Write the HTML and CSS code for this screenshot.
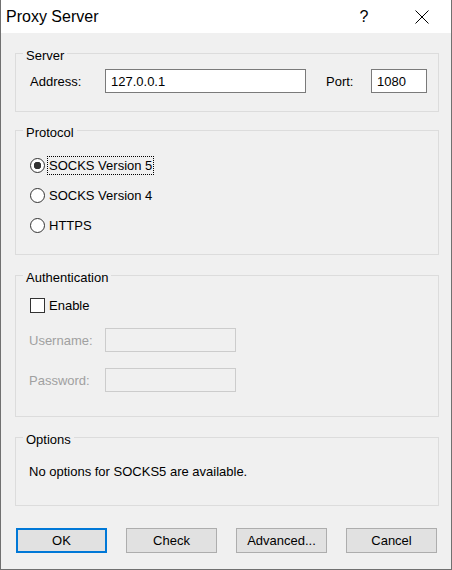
FILE: index.html
```html
<!DOCTYPE html>
<html lang="en">
<head>
    <meta charset="UTF-8">
    <title>Proxy Server</title>
    <link rel="stylesheet" href="styles.css">
</head>
<body>
    <div class="window">
        <div class="titlebar">
            <span class="title">Proxy Server</span>
            <span class="caption-btn help">?</span>
            <span class="caption-btn close">
                <svg width="14" height="14" viewBox="0 0 14 14">
                    <path d="M0.5 0.5 L13.5 13.5 M13.5 0.5 L0.5 13.5" stroke="#000" stroke-width="1" fill="none"/>
                </svg>
            </span>
        </div>

        <div class="content">
            <div class="group group-server">
                <div class="group-title">Server</div>
                <div class="row">
                    <label class="label label-address" for="address">Address:</label>
                    <input class="field field-address" id="address" type="text" value="127.0.0.1">
                    <label class="label label-port" for="port">Port:</label>
                    <input class="field field-port" id="port" type="text" value="1080">
                </div>
            </div>

            <div class="group group-protocol">
                <div class="group-title">Protocol</div>
                <div class="radios">
                    <label class="check-row">
                        <input type="radio" name="protocol" checked>
                        <span class="check-text focused">SOCKS Version 5</span>
                    </label>
                    <label class="check-row">
                        <input type="radio" name="protocol">
                        <span class="check-text">SOCKS Version 4</span>
                    </label>
                    <label class="check-row">
                        <input type="radio" name="protocol">
                        <span class="check-text">HTTPS</span>
                    </label>
                </div>
            </div>

            <div class="group group-auth">
                <div class="group-title">Authentication</div>
                <label class="check-row enable-row">
                    <input type="checkbox">
                    <span class="check-text">Enable</span>
                </label>
                <div class="row auth-row">
                    <label class="label label-auth disabled" for="username">Username:</label>
                    <input class="field field-auth" id="username" type="text" disabled>
                </div>
                <div class="row auth-row">
                    <label class="label label-auth disabled" for="password">Password:</label>
                    <input class="field field-auth" id="password" type="password" disabled>
                </div>
            </div>

            <div class="group group-options">
                <div class="group-title">Options</div>
                <p class="options-text">No options for SOCKS5 are available.</p>
            </div>

            <div class="buttons">
                <button class="btn btn-default">OK</button>
                <button class="btn">Check</button>
                <button class="btn">Advanced...</button>
                <button class="btn">Cancel</button>
            </div>
        </div>
    </div>
</body>
</html>
```

FILE: styles.css
```css
body {
    margin: 0;
    font-family: "Liberation Sans", Arial, sans-serif;
    font-size: 13px;
    color: #000;
}

.window {
    width: 452px;
    height: 570px;
    box-sizing: border-box;
    border: 1px solid #707070;
    border-top: 0;
    background: #f0f0f0;
}

/* title bar */
.titlebar {
    height: 33px;
    background: #fff;
    display: flex;
    align-items: center;
}

.title {
    flex: 1;
    padding-left: 5px;
    font-size: 16px;
}

.caption-btn {
    width: 58px;
    height: 33px;
    display: flex;
    align-items: center;
    justify-content: center;
}

.help {
    font-size: 16px;
}

/* dialog body */
.content {
    padding: 20px 12px 0 14px;
}

.group {
    border: 1px solid #dcdcdc;
    box-sizing: border-box;
}

.group-title {
    width: fit-content;
    margin: -6px 0 0 7px;
    padding: 0 3px;
    line-height: 16px;
    background: #f0f0f0;
}

.group-server {
    height: 59px;
}

.group-protocol {
    height: 125px;
    margin-top: 18px;
}

.group-auth {
    height: 142px;
    margin-top: 20px;
}

.group-options {
    height: 69px;
    margin-top: 20px;
}

.row {
    display: flex;
    align-items: center;
    height: 24px;
}

.group-server .row {
    margin-top: 5px;
    padding-left: 14px;
}

.label {
    flex: none;
}

.label-address {
    width: 75px;
}

.label-port {
    width: 45px;
    margin-left: 20px;
}

.field {
    box-sizing: border-box;
    height: 24px;
    margin: 0;
    padding: 0 5px;
    border: 1px solid #7a7a7a;
    background: #fff;
    font: inherit;
    color: #000;
    outline: none;
}

.field-address {
    width: 201px;
}

.field-port {
    width: 56px;
}

.field:disabled {
    border-color: #cccccc;
    background: #f0f0f0;
}

.disabled {
    color: #a0a0a0;
}

/* radio buttons and checkbox */
.radios {
    display: flex;
    flex-direction: column;
    gap: 10px;
    margin-top: 14px;
    padding-left: 14px;
}

.check-row {
    display: flex;
    align-items: center;
    height: 20px;
}

.check-row input {
    appearance: none;
    margin: 0;
    flex: none;
    background: #fff;
    border: 1px solid #333;
}

.check-row input[type="radio"] {
    width: 15px;
    height: 15px;
    border-radius: 50%;
}

.check-row input[type="radio"]:checked {
    background: radial-gradient(circle, #333 0, #333 3.5px, #fff 4px);
}

.check-row input[type="checkbox"] {
    width: 15px;
    height: 15px;
}

.check-text {
    margin-left: 3px;
    padding: 0 1px;
    line-height: 17px;
}

.check-text.focused {
    outline: 1px dotted #000;
}

.enable-row {
    margin-top: 11px;
    padding-left: 14px;
    height: 16px;
}

.enable-row .check-text {
    margin-left: 3px;
}

.auth-row {
    padding-left: 13px;
}

.enable-row + .auth-row {
    margin-top: 15px;
}

.auth-row + .auth-row {
    margin-top: 16px;
}

.label-auth {
    width: 76px;
}

.field-auth {
    width: 131px;
}

.options-text {
    margin: 16px 0 0;
    padding-left: 13px;
    line-height: 16px;
}

/* bottom buttons */
.buttons {
    display: flex;
    justify-content: space-between;
    margin: 22px 2px 0 1px;
}

.btn {
    width: 91px;
    height: 25px;
    box-sizing: border-box;
    padding: 0;
    border: 1px solid #adadad;
    background: #e1e1e1;
    font: inherit;
    color: #000;
}

.btn-default {
    border: 2px solid #0078d7;
}
```
